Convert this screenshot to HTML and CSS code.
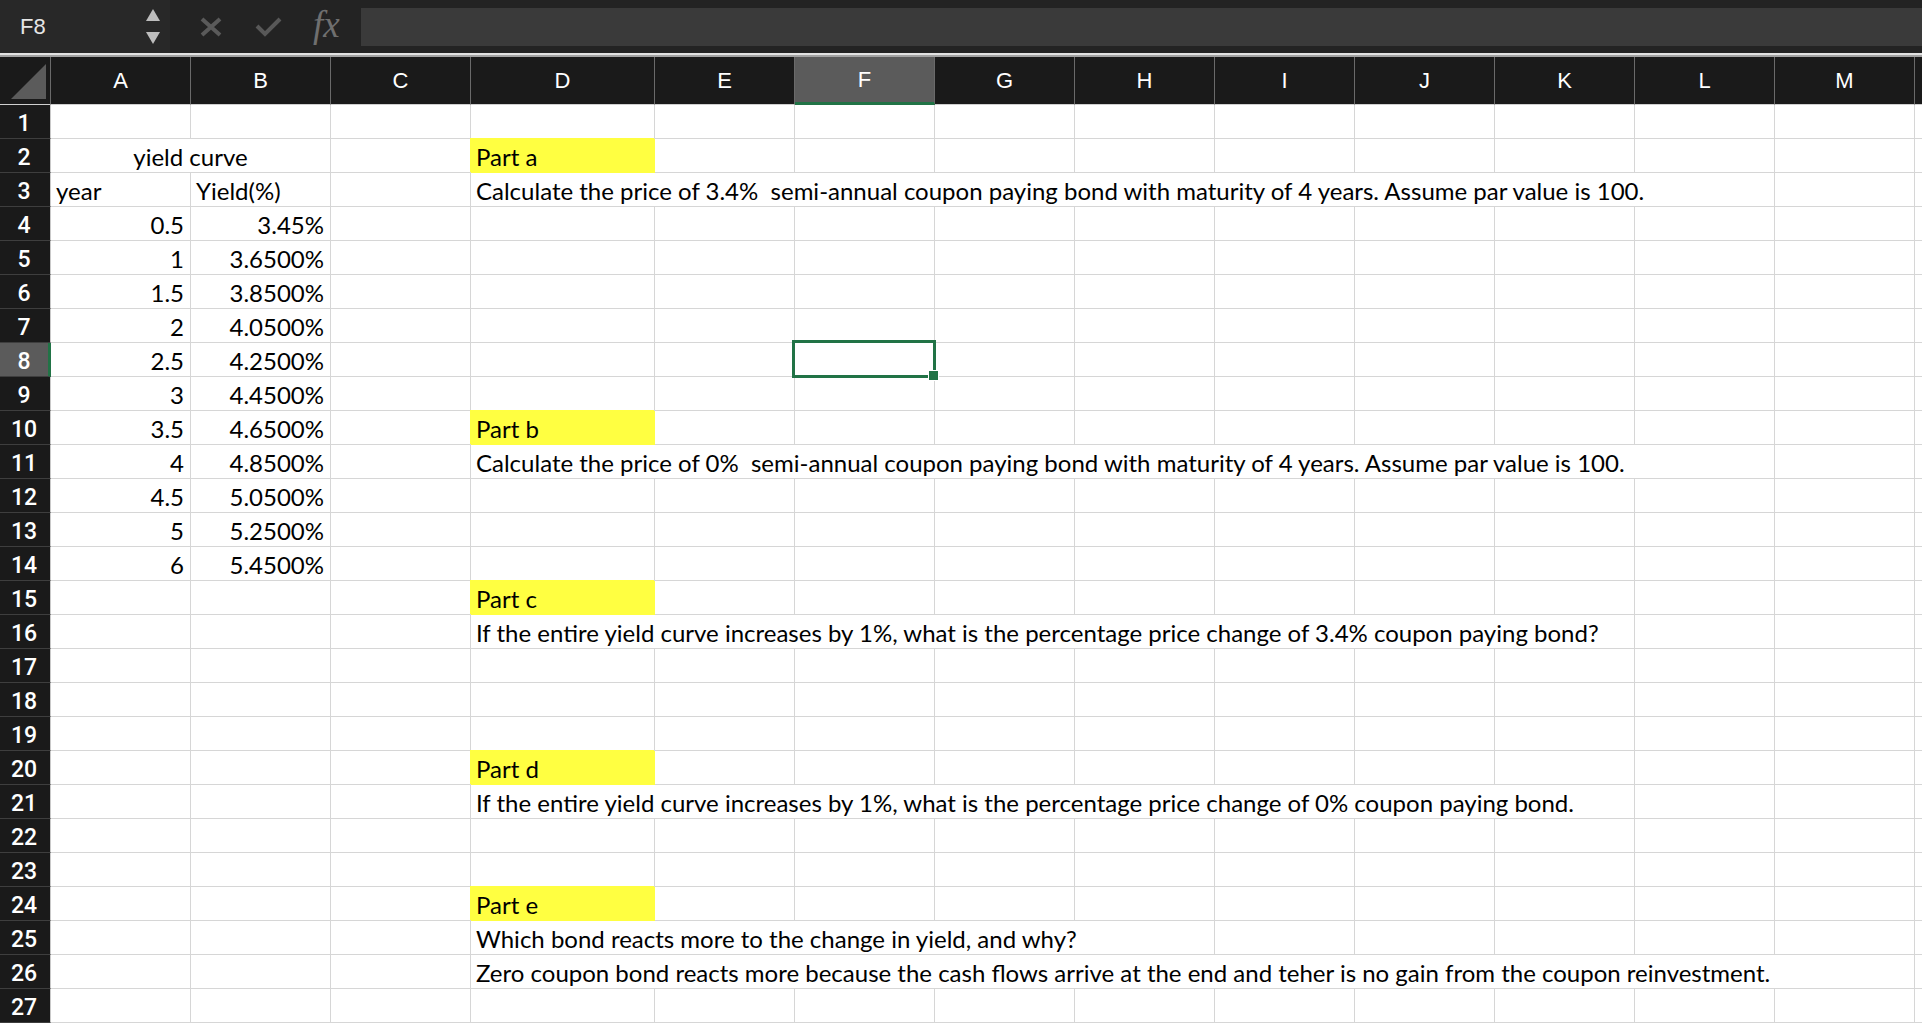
FILE: index.html
```html
<!DOCTYPE html>
<html lang="en">
<head>
<meta charset="utf-8">
<title>Yield curve</title>
<link rel="stylesheet" href="styles.css">
</head>
<body>
<div class="app">
  <div class="topbar">
    <div class="namebox">
      <span class="ref">F8</span>
      <svg class="spin" width="14" height="36" viewBox="0 0 14 36"><polygon points="7,0 14,12 0,12" fill="#bdbdbd"/><polygon points="0,23 14,23 7,35" fill="#bdbdbd"/></svg>
    </div>
    <div class="tools">
      <svg width="22" height="20" viewBox="0 0 22 20"><path d="M2 2 L20 18 M20 2 L2 18" stroke="#5a5a5a" stroke-width="4" fill="none"/></svg>
      <svg width="27" height="20" viewBox="0 0 27 20"><path d="M2 9 L10 17 L25 2" stroke="#585858" stroke-width="4" fill="none"/></svg>
      <span class="fx">fx</span>
    </div>
    <div class="input"></div>
  </div>
  <div class="sep"></div>
  <div class="sheet">
    <div class="corner"><svg width="36" height="36" viewBox="0 0 36 36"><polygon points="0,35 35,0 35,35" fill="#5b5b5b"/></svg></div>
    <div class="h">A</div><div class="h">B</div><div class="h">C</div><div class="h">D</div><div class="h">E</div><div class="h hl">F</div><div class="h">G</div><div class="h">H</div><div class="h">I</div><div class="h">J</div><div class="h">K</div><div class="h">L</div><div class="h">M</div><div class="h last"></div>

    <div class="r">1</div><div class="c"></div><div class="c"></div><div class="c"></div><div class="c"></div><div class="c"></div><div class="c"></div><div class="c"></div><div class="c"></div><div class="c"></div><div class="c"></div><div class="c"></div><div class="c"></div><div class="c"></div><div class="c"></div>

    <div class="r">2</div><div class="c ctr s2">yield curve</div><div class="c"></div><div class="c y">Part a</div><div class="c"></div><div class="c"></div><div class="c"></div><div class="c"></div><div class="c"></div><div class="c"></div><div class="c"></div><div class="c"></div><div class="c"></div><div class="c"></div>

    <div class="r">3</div><div class="c">year</div><div class="c">Yield(%)</div><div class="c"></div><div class="c s9">Calculate the price of 3.4%&nbsp; semi-annual coupon paying bond with maturity of 4 years. Assume par value is 100.</div><div class="c"></div><div class="c"></div>

    <div class="r">4</div><div class="c n">0.5</div><div class="c n">3.45%</div><div class="c"></div><div class="c"></div><div class="c"></div><div class="c"></div><div class="c"></div><div class="c"></div><div class="c"></div><div class="c"></div><div class="c"></div><div class="c"></div><div class="c"></div><div class="c"></div>

    <div class="r">5</div><div class="c n">1</div><div class="c n">3.6500%</div><div class="c"></div><div class="c"></div><div class="c"></div><div class="c"></div><div class="c"></div><div class="c"></div><div class="c"></div><div class="c"></div><div class="c"></div><div class="c"></div><div class="c"></div><div class="c"></div>

    <div class="r">6</div><div class="c n">1.5</div><div class="c n">3.8500%</div><div class="c"></div><div class="c"></div><div class="c"></div><div class="c"></div><div class="c"></div><div class="c"></div><div class="c"></div><div class="c"></div><div class="c"></div><div class="c"></div><div class="c"></div><div class="c"></div>

    <div class="r">7</div><div class="c n">2</div><div class="c n">4.0500%</div><div class="c"></div><div class="c"></div><div class="c"></div><div class="c"></div><div class="c"></div><div class="c"></div><div class="c"></div><div class="c"></div><div class="c"></div><div class="c"></div><div class="c"></div><div class="c"></div>

    <div class="r rhl">8</div><div class="c n">2.5</div><div class="c n">4.2500%</div><div class="c"></div><div class="c"></div><div class="c"></div><div class="c cur"><span class="sel"><span class="handle"></span></span></div><div class="c"></div><div class="c"></div><div class="c"></div><div class="c"></div><div class="c"></div><div class="c"></div><div class="c"></div><div class="c"></div>

    <div class="r">9</div><div class="c n">3</div><div class="c n">4.4500%</div><div class="c"></div><div class="c"></div><div class="c"></div><div class="c"></div><div class="c"></div><div class="c"></div><div class="c"></div><div class="c"></div><div class="c"></div><div class="c"></div><div class="c"></div><div class="c"></div>

    <div class="r">10</div><div class="c n">3.5</div><div class="c n">4.6500%</div><div class="c"></div><div class="c y">Part b</div><div class="c"></div><div class="c"></div><div class="c"></div><div class="c"></div><div class="c"></div><div class="c"></div><div class="c"></div><div class="c"></div><div class="c"></div><div class="c"></div>

    <div class="r">11</div><div class="c n">4</div><div class="c n">4.8500%</div><div class="c"></div><div class="c s9">Calculate the price of 0%&nbsp; semi-annual coupon paying bond with maturity of 4 years. Assume par value is 100.</div><div class="c"></div><div class="c"></div>

    <div class="r">12</div><div class="c n">4.5</div><div class="c n">5.0500%</div><div class="c"></div><div class="c"></div><div class="c"></div><div class="c"></div><div class="c"></div><div class="c"></div><div class="c"></div><div class="c"></div><div class="c"></div><div class="c"></div><div class="c"></div><div class="c"></div>

    <div class="r">13</div><div class="c n">5</div><div class="c n">5.2500%</div><div class="c"></div><div class="c"></div><div class="c"></div><div class="c"></div><div class="c"></div><div class="c"></div><div class="c"></div><div class="c"></div><div class="c"></div><div class="c"></div><div class="c"></div><div class="c"></div>

    <div class="r">14</div><div class="c n">6</div><div class="c n">5.4500%</div><div class="c"></div><div class="c"></div><div class="c"></div><div class="c"></div><div class="c"></div><div class="c"></div><div class="c"></div><div class="c"></div><div class="c"></div><div class="c"></div><div class="c"></div><div class="c"></div>

    <div class="r">15</div><div class="c"></div><div class="c"></div><div class="c"></div><div class="c y">Part c</div><div class="c"></div><div class="c"></div><div class="c"></div><div class="c"></div><div class="c"></div><div class="c"></div><div class="c"></div><div class="c"></div><div class="c"></div><div class="c"></div>

    <div class="r">16</div><div class="c"></div><div class="c"></div><div class="c"></div><div class="c s8">If the entire yield curve increases by 1%, what is the percentage price change of 3.4% coupon paying bond?</div><div class="c"></div><div class="c"></div><div class="c"></div>

    <div class="r">17</div><div class="c"></div><div class="c"></div><div class="c"></div><div class="c"></div><div class="c"></div><div class="c"></div><div class="c"></div><div class="c"></div><div class="c"></div><div class="c"></div><div class="c"></div><div class="c"></div><div class="c"></div><div class="c"></div>

    <div class="r">18</div><div class="c"></div><div class="c"></div><div class="c"></div><div class="c"></div><div class="c"></div><div class="c"></div><div class="c"></div><div class="c"></div><div class="c"></div><div class="c"></div><div class="c"></div><div class="c"></div><div class="c"></div><div class="c"></div>

    <div class="r">19</div><div class="c"></div><div class="c"></div><div class="c"></div><div class="c"></div><div class="c"></div><div class="c"></div><div class="c"></div><div class="c"></div><div class="c"></div><div class="c"></div><div class="c"></div><div class="c"></div><div class="c"></div><div class="c"></div>

    <div class="r">20</div><div class="c"></div><div class="c"></div><div class="c"></div><div class="c y">Part d</div><div class="c"></div><div class="c"></div><div class="c"></div><div class="c"></div><div class="c"></div><div class="c"></div><div class="c"></div><div class="c"></div><div class="c"></div><div class="c"></div>

    <div class="r">21</div><div class="c"></div><div class="c"></div><div class="c"></div><div class="c s8">If the entire yield curve increases by 1%, what is the percentage price change of 0% coupon paying bond.</div><div class="c"></div><div class="c"></div><div class="c"></div>

    <div class="r">22</div><div class="c"></div><div class="c"></div><div class="c"></div><div class="c"></div><div class="c"></div><div class="c"></div><div class="c"></div><div class="c"></div><div class="c"></div><div class="c"></div><div class="c"></div><div class="c"></div><div class="c"></div><div class="c"></div>

    <div class="r">23</div><div class="c"></div><div class="c"></div><div class="c"></div><div class="c"></div><div class="c"></div><div class="c"></div><div class="c"></div><div class="c"></div><div class="c"></div><div class="c"></div><div class="c"></div><div class="c"></div><div class="c"></div><div class="c"></div>

    <div class="r">24</div><div class="c"></div><div class="c"></div><div class="c"></div><div class="c y">Part e</div><div class="c"></div><div class="c"></div><div class="c"></div><div class="c"></div><div class="c"></div><div class="c"></div><div class="c"></div><div class="c"></div><div class="c"></div><div class="c"></div>

    <div class="r">25</div><div class="c"></div><div class="c"></div><div class="c"></div><div class="c s5">Which bond reacts more to the change in yield, and why?</div><div class="c"></div><div class="c"></div><div class="c"></div><div class="c"></div><div class="c"></div><div class="c"></div>

    <div class="r">26</div><div class="c"></div><div class="c"></div><div class="c"></div><div class="c s10">Zero coupon bond reacts more because the cash flows arrive at the end and teher is no gain from the coupon reinvestment.</div><div class="c"></div>

    <div class="r">27</div><div class="c"></div><div class="c"></div><div class="c"></div><div class="c"></div><div class="c"></div><div class="c"></div><div class="c"></div><div class="c"></div><div class="c"></div><div class="c"></div><div class="c"></div><div class="c"></div><div class="c"></div><div class="c"></div>
  </div>
</div>
</body>
</html>
```
FILE: styles.css
```css
html, body {
  margin: 0;
  padding: 0;
  background: #ffffff;
  overflow: hidden;
}
.app {
  width: 1922px;
  height: 1024px;
  overflow: hidden;
  display: flex;
  flex-direction: column;
}
.topbar {
  height: 53px;
  display: flex;
  background: #232323;
  flex: none;
}
.namebox {
  width: 170px;
  box-sizing: border-box;
  background: #282828;
  display: flex;
  align-items: center;
  justify-content: space-between;
  padding: 0 10px 0 20px;
}
.ref {
  font-family: "Liberation Sans", Arial, sans-serif;
  font-size: 22px;
  color: #e6e6e6;
}
.tools {
  width: 191px;
  box-sizing: border-box;
  display: flex;
  align-items: center;
  padding-left: 30px;
  gap: 33px;
}
.fx {
  font-family: "Liberation Serif", "Times New Roman", serif;
  font-style: italic;
  font-size: 37px;
  color: #6f6f6f;
  line-height: 1;
  margin-top: -4px;
  margin-left: -2px;
}
.input {
  flex: 1;
  margin: 8px 0 7px;
  background: #3a3a3a;
}
.sep {
  height: 2px;
  background: #e2e2e2;
  border-bottom: 2px solid #a3a3a3;
  flex: none;
}
.sheet {
  flex: 1;
  display: grid;
  grid-template-columns: 51px 140px 140px 140px 184px 140px 140px 140px 140px 140px 140px 140px 140px 140px 1fr;
  grid-template-rows: 48px repeat(27, 34px);
  font-family: Lato, "Open Sans", sans-serif;
}
.corner {
  background: #1a1a1a;
  border-right: 1px solid #6a6a6a;
  border-bottom: 1px solid #cfcfcf;
  display: flex;
  align-items: flex-end;
  justify-content: flex-end;
  padding: 0 3px 4px 0;
}
.h {
  background: #1a1a1a;
  border-right: 1px solid #6a6a6a;
  border-bottom: 1px solid #cfcfcf;
  color: #ffffff;
  font-family: "Liberation Sans", Arial, sans-serif;
  font-size: 22px;
  display: flex;
  align-items: center;
  justify-content: center;
}
.h.hl {
  background: #5b5b5b;
  border-bottom: 3px solid #217346;
}
.h.last {
  border-right: none;
}
.r {
  background: #1a1a1a;
  border-right: 1px solid #c9c9c9;
  border-bottom: 1px solid #3e3e3e;
  color: #ffffff;
  font-family: Roboto, "Liberation Sans", sans-serif;
  font-weight: 500;
  font-size: 23px;
  display: flex;
  align-items: center;
  justify-content: center;
  padding: 3px 2px 0 0;
}
.r.rhl {
  background: #5b5b5b;
  border-right: 3px solid #217346;
  padding-right: 0;
}
.c {
  border-right: 1px solid #d6d6d6;
  border-bottom: 1px solid #d6d6d6;
  display: flex;
  align-items: flex-end;
  padding: 0 5px 2px 5px;
  font-size: 24px;
  line-height: 26px;
  color: #000000;
  white-space: nowrap;
  min-width: 0;
}
.c:last-child {
  border-right: none;
}
.c.n {
  justify-content: flex-end;
  padding-right: 6px;
}
.c.ctr {
  justify-content: center;
}
.c.y {
  background: #ffff41;
  border-color: #ffff41;
  box-shadow: -1px -1px 0 #ffff41;
}
.s2 { grid-column: span 2; }
.s5 { grid-column: span 5; }
.s8 { grid-column: span 8; }
.s9 { grid-column: span 9; }
.s10 { grid-column: span 10; }
.c.cur {
  position: relative;
}
.sel {
  position: absolute;
  left: -3px;
  top: -3px;
  right: -2px;
  bottom: -2px;
  border: 3px solid #217346;
  z-index: 2;
}
.handle {
  position: absolute;
  right: -6px;
  bottom: -6px;
  width: 9px;
  height: 9px;
  background: #217346;
  border: 1px solid #ffffff;
}
```
